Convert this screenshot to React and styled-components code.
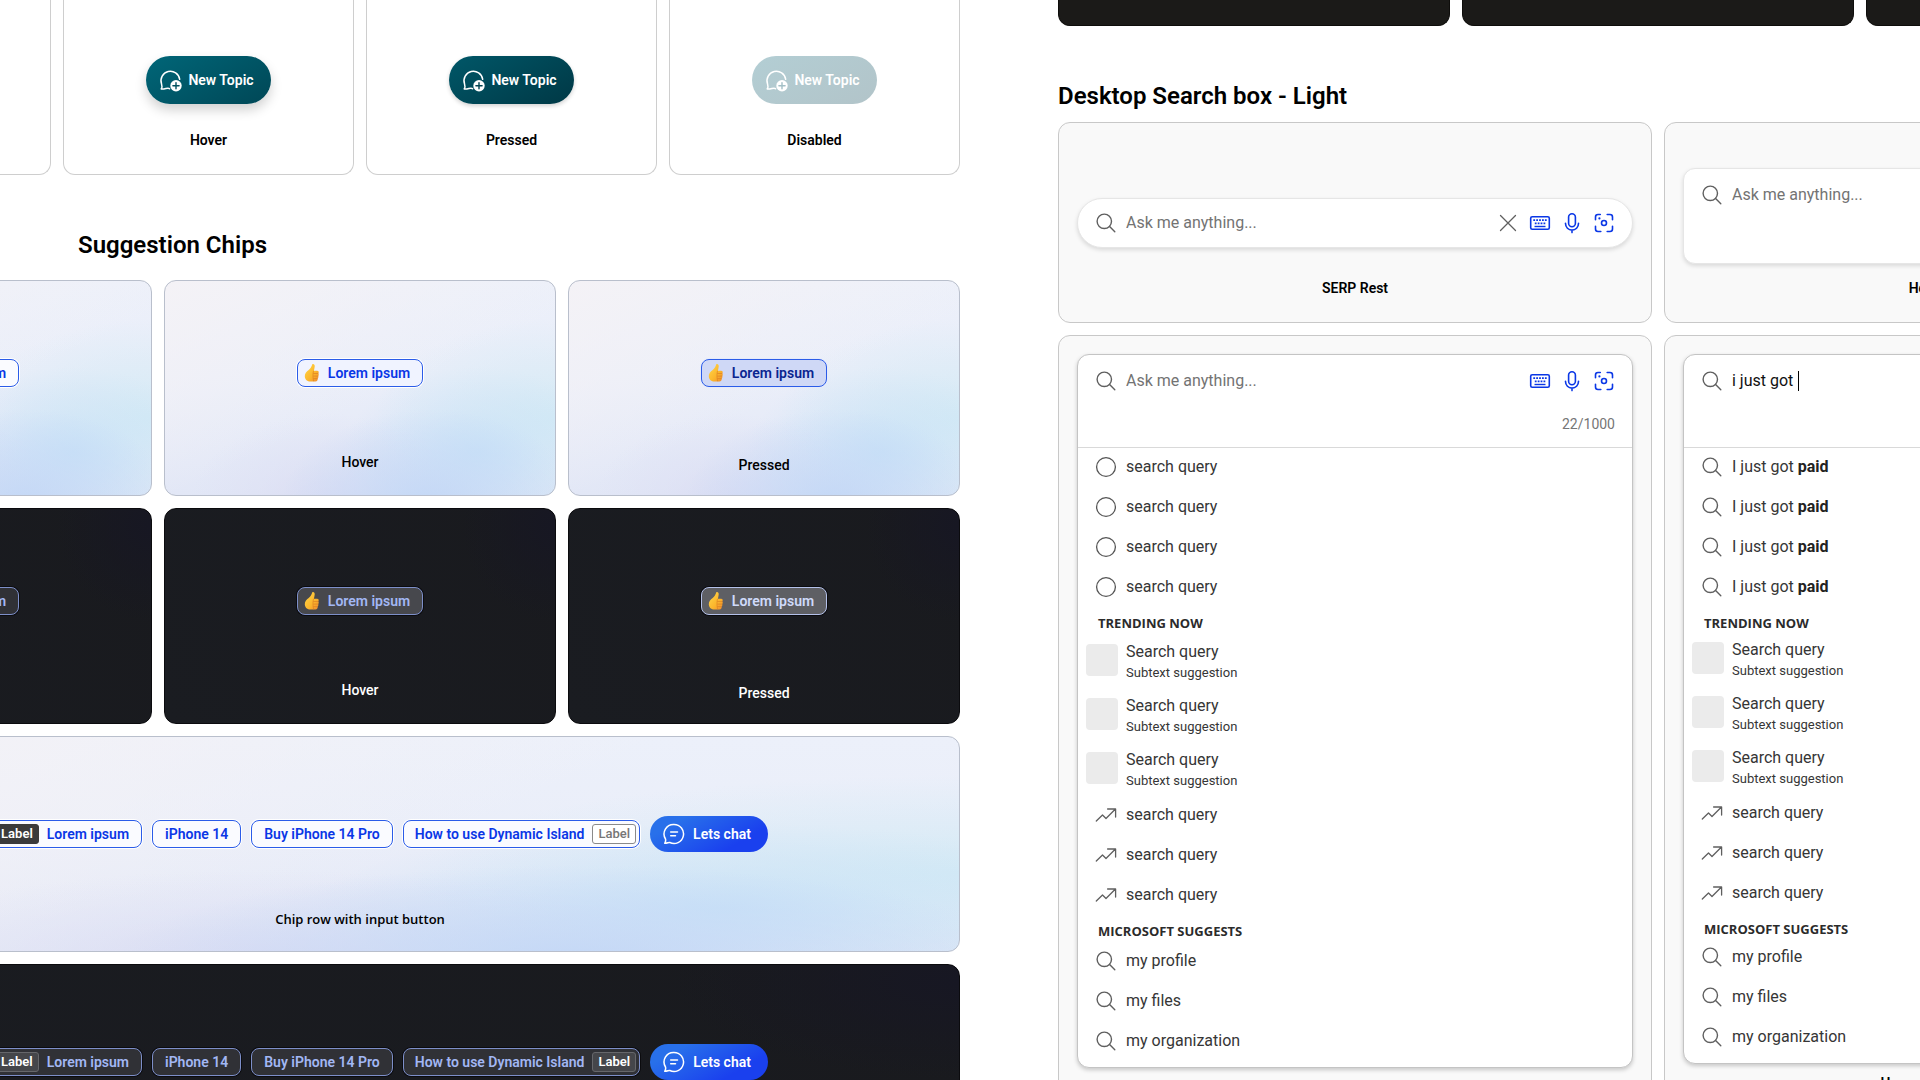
import React from 'react';
import styled, { createGlobalStyle } from 'styled-components';

const GlobalStyle = createGlobalStyle`
  *, *::before, *::after {
    box-sizing: border-box;
  }
  body {
    margin: 0;
    background: #fff;
    color: #000;
    font-family: Roboto, "Liberation Sans", sans-serif;
  }
  button, input {
    font-family: inherit;
  }
`;

/* icons */

const NewTopicIcon = ({ plus }) => (
  <svg width="24" height="24" viewBox="0 0 24 24" fill="none" aria-hidden="true">
    <path
      d="M10.600 20.800c-1.900-1.900-4.500.9-8.400.2 1.200-1.700 1-3.200.3-5.300A9.400 9.400 0 1 1 20.700 11.300"
      stroke="#fff"
      strokeWidth="1.500"
      strokeLinejoin="round"
      strokeLinecap="round"
    />
    <circle cx="17" cy="17.700" r="5.700" fill="#fff" />
    <path d="M17 14.600v6.200M13.900 17.700h6.200" stroke={plus} strokeWidth="1.400" strokeLinecap="round" />
  </svg>
);

const ChatIcon = () => (
  <svg width="24" height="24" viewBox="0 0 24 24" fill="none" stroke="#fff" strokeWidth="1.500" strokeLinecap="round" strokeLinejoin="round" aria-hidden="true">
    <path d="M12 2.500a9.500 9.500 0 1 1-4.200 18c-1.300-.3-2.500.9-5.100.8.8-1.200 1.300-2.400.8-4.300A9.500 9.500 0 0 1 12 2.500Z" />
    <path d="M8.700 10h6.800M8.700 13.800h4.800" />
  </svg>
);

const SearchIcon = () => (
  <svg width="24" height="24" viewBox="0 0 24 24" fill="none" stroke="#5f5f5f" strokeWidth="1.400" strokeLinecap="round" aria-hidden="true">
    <circle cx="10.300" cy="10.300" r="7.200" />
    <path d="m15.600 15.600 5.200 5.200" />
  </svg>
);

const CircleIcon = () => (
  <svg width="24" height="24" viewBox="0 0 24 24" fill="none" stroke="#555" strokeWidth="1.300" aria-hidden="true">
    <circle cx="12" cy="12" r="9.400" />
  </svg>
);

const TrendIcon = () => (
  <svg width="24" height="24" viewBox="0 0 24 24" fill="none" stroke="#5f5f5f" strokeWidth="1.300" strokeLinecap="round" strokeLinejoin="round" aria-hidden="true">
    <path d="m2.300 18 6.200-6 3.500 3.500 9.200-9.200M13.600 6h8v8" />
  </svg>
);

const CloseIcon = () => (
  <svg width="24" height="24" viewBox="0 0 24 24" fill="none" stroke="#5f5f5f" strokeWidth="1.300" strokeLinecap="round" aria-hidden="true">
    <path d="m4.500 4.500 15 15M19.500 4.500l-15 15" />
  </svg>
);

const KeyboardIcon = () => (
  <svg width="24" height="24" viewBox="0 0 24 24" fill="none" stroke="#0a37e6" aria-hidden="true">
    <rect x="2.700" y="5.700" width="18.600" height="12.600" rx="1.500" strokeWidth="1.600" />
    <path d="M5.300 9.200h13.400" strokeWidth="1.800" strokeDasharray="1.800 1.100" />
    <path d="M6.800 12.300h10.600" strokeWidth="1.800" strokeDasharray="1.800 1.100" />
    <path d="M6.500 15.500h11" strokeWidth="1.400" />
  </svg>
);

const MicIcon = () => (
  <svg width="24" height="24" viewBox="0 0 24 24" fill="none" stroke="#0a37e6" strokeWidth="1.600" strokeLinecap="round" aria-hidden="true">
    <rect x="8.600" y="2.700" width="6.800" height="13" rx="3.400" />
    <path d="M5.500 12.200v.4a6.500 6.500 0 0 0 13 0v-.4M12 19.300v2.300" />
  </svg>
);

const LensIcon = () => (
  <svg width="24" height="24" viewBox="0 0 24 24" fill="none" stroke="#0a37e6" strokeWidth="1.600" strokeLinecap="round" aria-hidden="true">
    <path d="M8.300 3.500H6A2.500 2.500 0 0 0 3.500 6v2.800M15.200 3.500H18A2.500 2.500 0 0 1 20.500 6v2.800M20.500 15.200V18a2.500 2.500 0 0 1-2.500 2.500h-2.800M8.800 20.500H6A2.500 2.500 0 0 1 3.500 18v-2.800" />
    <circle cx="12" cy="12" r="2.500" />
    <circle cx="7.400" cy="7.400" r="1.100" fill="#0a37e6" stroke="none" />
  </svg>
);

const ThumbIcon = () => (
  <svg width="16" height="20" viewBox="0 0 16 20" aria-hidden="true">
    <defs>
      <linearGradient id="thumb" x1="0" y1="0" x2="1" y2="1">
        <stop offset="0" stopColor="#ffd84a" />
        <stop offset="0.6" stopColor="#fbb52c" />
        <stop offset="1" stopColor="#ee8a2e" />
      </linearGradient>
    </defs>
    <path
      d="M8.300 1.200c1.500-.5 2.500.5 2.400 2.200-.1 1.600-.6 3.100-.8 4.300h3.100c1.900 0 2.200 2 1.200 2.700.9.8.7 2.100-.1 2.600.6.8.3 2-.5 2.500.4 1.300-.4 2.900-2.200 3H6.600c-3.300 0-5.600-1.900-5.800-5-.2-3.200 1.600-4.700 3.900-6.500C6.700 5.400 7.400 3.900 8.300 1.200Z"
      fill="url(#thumb)"
    />
    <path d="M9.600 10.500h4.400M9.600 13.100h4.300M9.600 15.600h3.700M9.400 8.200c-.7 3.500-.5 7 .2 9.700" fill="none" stroke="#dd8122" strokeWidth="0.700" strokeLinecap="round" />
  </svg>
);

/* parts */

const Page = styled.main`
  display: grid;
  grid-template-columns: 50% 1fr;
  height: 100vh;
  overflow: hidden;
`;

const LeftBoard = styled.section`
  display: flex;
  justify-content: flex-end;
  overflow: hidden;
`;

const LeftContent = styled.div`
  flex: none;
  width: 1200px;
`;

const RightBoard = styled.section`
  padding-left: 98px;
  overflow: hidden;
`;

const Heading = styled.h2`
  margin: 0;
  font-size: 24px;
  line-height: 32px;
  font-weight: 600;
`;

const ChipsHeading = styled(Heading)`
  padding: 54px 0 19px 318px;
`;

const SearchHeading = styled(Heading)`
  padding: 54px 0 10px;
`;

const Caption = styled.p`
  margin: 0;
  font-size: 14px;
  line-height: 20px;
  font-weight: 600;
  text-align: center;
`;

const TopicGrid = styled.div`
  display: grid;
  grid-template-columns: repeat(4, 1fr);
  gap: 12px;
`;

const TopicCard = styled.article`
  display: flex;
  flex-direction: column;
  align-items: center;
  gap: 26px;
  padding: 56px 0 24px;
  border: 1px solid #cecece;
  border-top: 0;
  border-radius: 0 0 12px 12px;
`;

const topicLook = {
  rest: { fill: 'linear-gradient(150deg, #007184, #005a6b)', shadow: '0 2px 4px rgba(0, 0, 0, 0.18)', plus: '#00606f' },
  hover: { fill: 'linear-gradient(150deg, #006678, #004756)', shadow: '0 6px 12px rgba(0, 0, 0, 0.18)', plus: '#00515f' },
  pressed: { fill: 'linear-gradient(150deg, #005768, #003845)', shadow: '0 2px 4px rgba(0, 0, 0, 0.18)', plus: '#004351' },
  disabled: { fill: 'linear-gradient(150deg, #b3ced4, #b2c4c9)', shadow: 'none', plus: '#a3bfc6' },
};

const TopicButton = styled.button`
  display: flex;
  align-items: center;
  gap: 5px;
  height: 48px;
  padding: 0 17px 0 13px;
  border: 0;
  border-radius: 24px;
  background: ${p => topicLook[p.$state].fill};
  box-shadow: ${p => topicLook[p.$state].shadow};
  color: #fff;
  font-size: 14px;
  font-weight: 600;
`;

const ChipGrid = styled.div`
  display: grid;
  grid-template-columns: repeat(3, 1fr);
  gap: 12px;
`;

const lightFill = `
  radial-gradient(ellipse 38% 44% at 68% 104%, #c4d8f6 0%, rgba(196, 216, 246, 0.5) 50%, rgba(196, 216, 246, 0) 100%),
  radial-gradient(ellipse 34% 40% at 80% 80%, rgba(198, 225, 247, 0.85) 0%, rgba(198, 225, 247, 0.35) 50%, rgba(198, 225, 247, 0) 100%),
  radial-gradient(ellipse 46% 46% at 100% 64%, #d4eaf5 0%, rgba(212, 234, 245, 0.5) 50%, rgba(212, 234, 245, 0) 100%),
  radial-gradient(ellipse 36% 44% at 42% 106%, #dadcf3 0%, rgba(218, 220, 243, 0.4) 50%, rgba(218, 220, 243, 0) 100%),
  linear-gradient(155deg, #f4f2f6 0%, rgba(244, 242, 246, 0.6) 25%, rgba(244, 242, 246, 0) 55%),
  linear-gradient(#ecf0fa 0%, #eaeef9 45%, #e2e7f6 100%)
`;

const darkFill = 'radial-gradient(ellipse 24% 45% at 100% 8%, #171723, rgba(23, 23, 35, 0)), linear-gradient(60deg, #1a1c21, #191a1e)';

const ChipCard = styled.article`
  display: flex;
  flex-direction: column;
  align-items: center;
  height: 216px;
  grid-column: ${p => (p.$wide ? '1 / -1' : 'auto')};
  padding-top: ${p => (p.$wide ? 79 : 78)}px;
  border: 1px solid ${p => (p.$dark ? '#0b0b0e' : '#b9bfcc')};
  border-radius: 12px;
  background: ${p => (p.$dark ? darkFill : lightFill)};
  color: ${p => (p.$dark ? '#fff' : '#000')};
`;

const ChipCaption = styled(Caption)`
  margin-top: ${p => p.$gap}px;
  font-weight: 500;
`;

const RowCaption = styled(ChipCaption)`
  font-family: "Open Sans", "Noto Sans", sans-serif;
  font-size: 13px;
  font-weight: 600;
`;

const ChipRow = styled.div`
  display: flex;
  align-items: center;
  gap: 10px;
`;

const chipColors = {
  rest: { ink: '#0a37e6', line: '#2b5ce8', fill: '#fafbff', ring: '#fff' },
  hover: { ink: '#0a37e6', line: '#2b5ce8', fill: '#f0f3ff', ring: '#fff' },
  pressed: { ink: '#0a2590', line: '#2b5ce8', fill: '#cfd8f6', ring: '#e6ebfb' },
  darkRest: { ink: '#a2b7f4', line: '#7d8fc9', fill: '#303136', ring: '#0b0b0e' },
  darkHover: { ink: '#a2b7f4', line: '#7d8fc9', fill: '#47484d', ring: '#0b0b0e' },
  darkPressed: { ink: '#cfdafa', line: '#b4c1ea', fill: '#5e5f64', ring: '#0b0b0e' },
};

const Chip = styled.button`
  display: flex;
  align-items: center;
  gap: 8px;
  height: 28px;
  padding: 0 ${p => (p.$tagEnd ? 3 : 12)}px 0 ${p => p.$lead || 12}px;
  border: 1px solid ${p => chipColors[p.$tone].line};
  border-radius: 8px;
  background: ${p => chipColors[p.$tone].fill};
  box-shadow: 0 0 0 1px ${p => chipColors[p.$tone].ring};
  color: ${p => chipColors[p.$tone].ink};
  font-size: 14px;
  font-weight: 600;
  white-space: nowrap;
`;

const tagColors = {
  solid: { ink: '#fff', line: '#3b3b3b', fill: '#3b3b3b' },
  outline: { ink: '#767676', line: '#8a8a8a', fill: '#fff' },
  dark: { ink: '#fff', line: '#66676b', fill: '#45464a' },
};

const Tag = styled.span`
  padding: 0 5px;
  border: 1px solid ${p => tagColors[p.$kind].line};
  border-radius: 3px;
  background: ${p => tagColors[p.$kind].fill};
  color: ${p => tagColors[p.$kind].ink};
  font-size: 13px;
  line-height: 18px;
  font-weight: ${p => (p.$kind === 'outline' ? 500 : 600)};
`;

const ChatButton = styled.button`
  display: flex;
  align-items: center;
  gap: 7px;
  height: 36px;
  padding: 0 17px 0 12px;
  border: 0;
  border-radius: 18px;
  background: linear-gradient(150deg, #2870ea 20%, #1a40ee 75%);
  color: #fff;
  font-size: 14px;
  font-weight: 600;
`;

const DarkGrid = styled.div`
  display: grid;
  grid-template-columns: repeat(3, 392px);
  gap: 12px;
`;

const DarkCard = styled.div`
  height: 26px;
  border: 1px solid #0e0d0b;
  border-top: 0;
  border-radius: 0 0 12px 12px;
  background: #1b1a18;
`;

const SearchGrid = styled.div`
  display: grid;
  grid-template-columns: repeat(2, 594px);
  gap: 12px;
`;

const SearchCard = styled.article`
  display: flex;
  flex-direction: column;
  padding: ${p => p.$top}px 18px 24px;
  border: 1px solid #c8c8c8;
  border-radius: 12px;
  background: #f9f9f9;
`;

const SearchCaption = styled(Caption)`
  padding-top: ${p => p.$gap}px;
`;

const SearchPanel = styled.div`
  border: 1px solid ${p => (p.$open ? '#c4c4c4' : '#e6e6e6')};
  border-radius: ${p => (p.$pill ? 25 : 12)}px;
  background: #fff;
  box-shadow: 0 2px 4px rgba(0, 0, 0, ${p => (p.$open ? 0.2 : 0.13)});
`;

const SearchHead = styled.div`
  display: flex;
  flex-direction: column;
  justify-content: space-between;
  height: ${p => p.$height}px;
  padding: ${p => (p.$pill ? 12 : 14)}px 16px 13px;
  border-bottom: ${p => (p.$open ? '1px solid #d9d9d9' : '0')};
`;

const Field = styled.label`
  display: flex;
  align-items: center;
  gap: 8px;
  height: 24px;
`;

const SearchInput = styled.input`
  flex: ${p => (p.$hug ? 'none' : '1')};
  field-sizing: ${p => (p.$hug ? 'content' : 'fixed')};
  min-width: 0;
  padding: 0;
  border: 0;
  outline: 0;
  background: transparent;
  color: #111;
  font-size: 16px;
  line-height: 24px;
  &::placeholder {
    color: #737373;
    opacity: 1;
  }
`;

const Caret = styled.span`
  width: 1px;
  height: 20px;
  margin-left: -7px;
  background: #000;
`;

const IconButton = styled.button`
  display: flex;
  padding: 0;
  border: 0;
  background: none;
`;

const Counter = styled.span`
  align-self: flex-end;
  padding-right: 1px;
  color: #767676;
  font-size: 14px;
  line-height: 20px;
`;

const List = styled.ul`
  margin: -1px 0 0;
  padding: 0 0 6px;
  list-style: none;
`;

const Item = styled.li`
  display: flex;
  align-items: center;
  gap: 8px;
  height: 40px;
  padding-left: 16px;
  color: #363636;
  font-size: 16px;
  line-height: 24px;
  b {
    font-weight: 700;
    color: #222;
  }
`;

const GroupTitle = styled.li`
  padding: 8px 0 ${p => (p.$compact ? 0 : 2)}px 20px;
  color: #2b2b2b;
  font-family: "Open Sans", "Noto Sans", sans-serif;
  font-size: 13px;
  line-height: 16px;
  font-weight: 700;
  text-transform: uppercase;
`;

const TopicItem = styled(Item)`
  height: 54px;
  padding-left: 8px;
`;

const Thumb = styled.span`
  width: 32px;
  height: 32px;
  border-radius: 4px;
  background: #ebebeb;
`;

const TopicText = styled.span`
  display: flex;
  flex-direction: column;
  padding-top: 2px;
  small {
    font-size: 13px;
    line-height: 18px;
  }
`;

const topicStates = [
  ['rest', 'Rest'],
  ['hover', 'Hover'],
  ['pressed', 'Pressed'],
  ['disabled', 'Disabled'],
];

const chipStates = [
  { name: 'Rest', light: 'rest', dark: 'darkRest', gap: 65 },
  { name: 'Hover', light: 'hover', dark: 'darkHover', gap: 65 },
  { name: 'Pressed', light: 'pressed', dark: 'darkPressed', gap: 68 },
];

const ChipSample = ({ state, dark }) => (
  <ChipCard $dark={dark}>
    <Chip type="button" $lead={6} $tone={dark ? state.dark : state.light}>
      <ThumbIcon />
      Lorem ipsum
    </Chip>
    <ChipCaption $gap={state.gap}>{state.name}</ChipCaption>
  </ChipCard>
);

const ChipRowSample = ({ dark }) => {
  const tone = dark ? 'darkRest' : 'rest';
  return (
    <ChipCard $dark={dark} $wide>
      <ChipRow>
        <Chip type="button" $lead={18} $tone={tone}>
          <ThumbIcon />
          <Tag $kind={dark ? 'dark' : 'solid'}>Label</Tag>
          Lorem ipsum
        </Chip>
        <Chip type="button" $tone={tone}>iPhone 14</Chip>
        <Chip type="button" $tone={tone}>Buy iPhone 14 Pro</Chip>
        <Chip type="button" $lead={11} $tone={tone} $tagEnd>
          How to use Dynamic Island
          <Tag $kind={dark ? 'dark' : 'outline'}>Label</Tag>
        </Chip>
        <ChatButton type="button">
          <ChatIcon />
          Lets chat
        </ChatButton>
      </ChipRow>
      <RowCaption $gap={57}>Chip row with input button</RowCaption>
    </ChipCard>
  );
};

const SearchActions = ({ clear }) => (
  <>
    {clear && (
      <IconButton type="button" aria-label="Clear">
        <CloseIcon />
      </IconButton>
    )}
    <IconButton type="button" aria-label="Keyboard">
      <KeyboardIcon />
    </IconButton>
    <IconButton type="button" aria-label="Voice search">
      <MicIcon />
    </IconButton>
    <IconButton type="button" aria-label="Visual search">
      <LensIcon />
    </IconButton>
  </>
);

const Suggestions = ({ typed, compact }) => (
  <List>
    {[0, 1, 2, 3].map(i => (
      <Item key={i}>
        {typed ? <SearchIcon /> : <CircleIcon />}
        {typed ? <span>I just got <b>paid</b></span> : 'search query'}
      </Item>
    ))}
    <GroupTitle $compact={compact}>Trending now</GroupTitle>
    {[0, 1, 2].map(i => (
      <TopicItem key={i}>
        <Thumb />
        <TopicText>
          Search query
          <small>Subtext suggestion</small>
        </TopicText>
      </TopicItem>
    ))}
    {[0, 1, 2].map(i => (
      <Item key={i}>
        <TrendIcon />
        search query
      </Item>
    ))}
    <GroupTitle $compact={compact}>Microsoft suggests</GroupTitle>
    {['my profile', 'my files', 'my organization'].map(text => (
      <Item key={text}>
        <SearchIcon />
        {text}
      </Item>
    ))}
  </List>
);

const App = () => (
  <>
    <GlobalStyle />
    <Page>
      <LeftBoard>
        <LeftContent>
          <TopicGrid>
            {topicStates.map(([state, name]) => (
              <TopicCard key={state}>
                <TopicButton type="button" $state={state} disabled={state === 'disabled'}>
                  <NewTopicIcon plus={topicLook[state].plus} />
                  New Topic
                </TopicButton>
                <Caption>{name}</Caption>
              </TopicCard>
            ))}
          </TopicGrid>
          <ChipsHeading>Suggestion Chips</ChipsHeading>
          <ChipGrid>
            {chipStates.map(state => (
              <ChipSample key={state.name} state={state} />
            ))}
            {chipStates.map(state => (
              <ChipSample key={state.name} state={state} dark />
            ))}
            <ChipRowSample />
            <ChipRowSample dark />
          </ChipGrid>
        </LeftContent>
      </LeftBoard>

      <RightBoard>
        <DarkGrid>
          <DarkCard />
          <DarkCard />
          <DarkCard />
        </DarkGrid>
        <SearchHeading>Desktop Search box - Light</SearchHeading>
        <SearchGrid>
          <SearchCard $top={75}>
            <SearchPanel $pill>
              <SearchHead $pill $height={48}>
                <Field>
                  <SearchIcon />
                  <SearchInput type="text" placeholder="Ask me anything..." />
                  <SearchActions clear />
                </Field>
              </SearchHead>
            </SearchPanel>
            <SearchCaption $gap={30}>SERP Rest</SearchCaption>
          </SearchCard>
          <SearchCard $top={45}>
            <SearchPanel>
              <SearchHead $height={94}>
                <Field>
                  <SearchIcon />
                  <SearchInput type="text" placeholder="Ask me anything..." />
                  <SearchActions />
                </Field>
              </SearchHead>
            </SearchPanel>
            <SearchCaption $gap={14}>Home Page Rest</SearchCaption>
          </SearchCard>
          <SearchCard $top={18}>
            <SearchPanel $open>
              <SearchHead $open $height={93}>
                <Field>
                  <SearchIcon />
                  <SearchInput type="text" placeholder="Ask me anything..." />
                  <SearchActions />
                </Field>
                <Counter>22/1000</Counter>
              </SearchHead>
              <Suggestions />
            </SearchPanel>
            <SearchCaption $gap={9}>SERP Auto Suggest</SearchCaption>
          </SearchCard>
          <SearchCard $top={18}>
            <SearchPanel $open>
              <SearchHead $open $height={93}>
                <Field>
                  <SearchIcon />
                  <SearchInput type="text" $hug defaultValue="i just got " />
                  <Caret />
                </Field>
                <Counter>22/1000</Counter>
              </SearchHead>
              <Suggestions typed compact />
            </SearchPanel>
            <SearchCaption $gap={9}>Home Page Auto Suggest</SearchCaption>
          </SearchCard>
        </SearchGrid>
      </RightBoard>
    </Page>
  </>
);

export default App;
